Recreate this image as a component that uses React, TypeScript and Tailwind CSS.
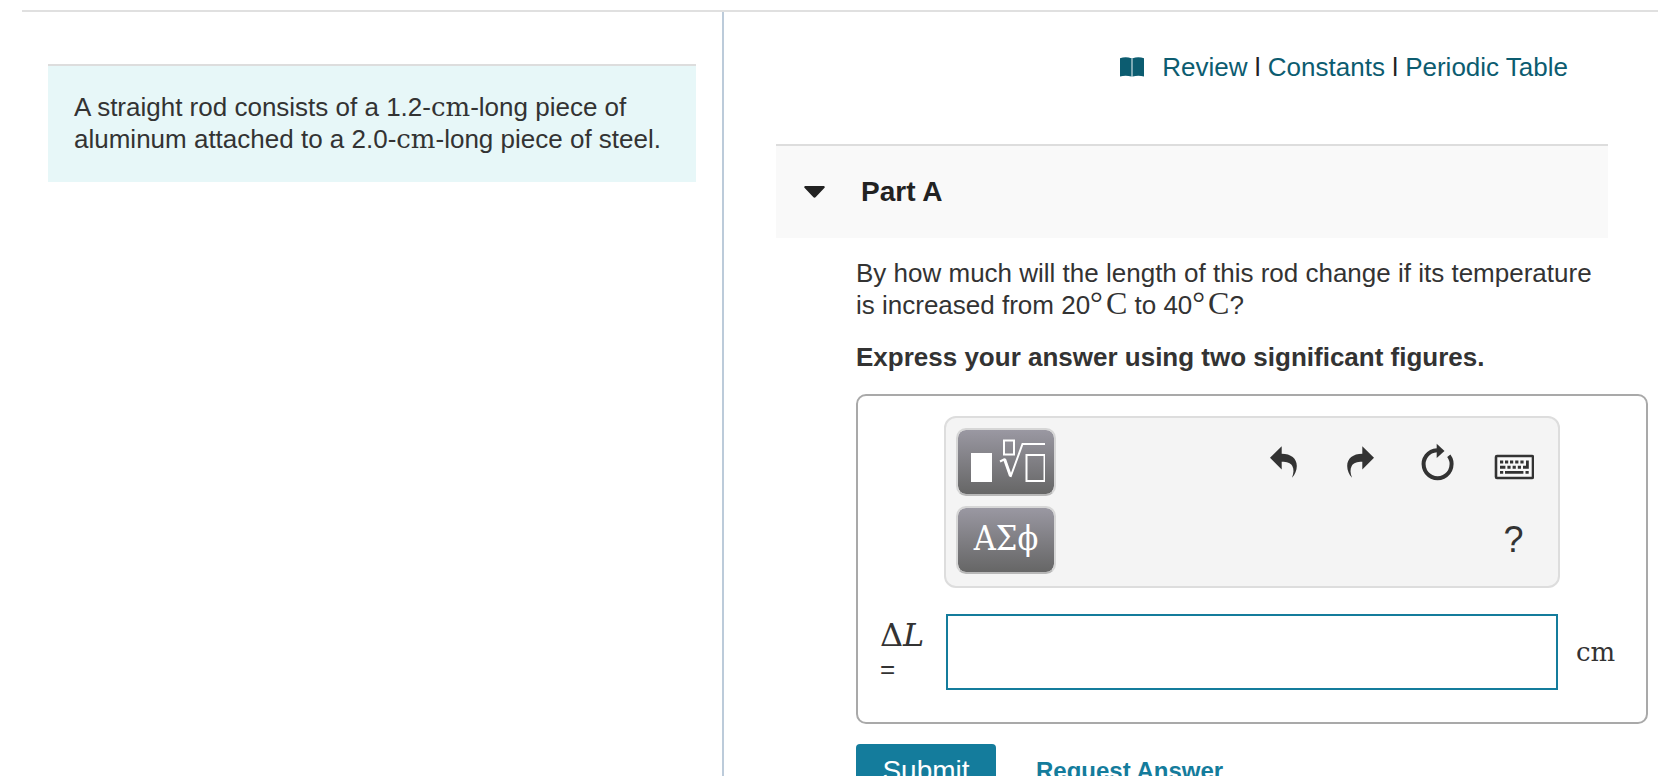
import type { ReactNode } from "react";

function Math({ children }: { children: ReactNode }) {
  return (
    <span className="font-['Liberation_Serif',serif] text-[32px] leading-7">
      {children}
    </span>
  );
}

function Unit({ children }: { children: ReactNode }) {
  return (
    <span className="font-['DejaVu_Serif',serif] text-[26px] leading-7">{children}</span>
  );
}

function Degrees({ value }: { value: number }) {
  return (
    <span className="whitespace-nowrap">
      {value}
      <Math>
        °<span className="ml-[3px]">C</span>
      </Math>
    </span>
  );
}

function IconButton({ label, children }: { label: string; children: ReactNode }) {
  return (
    <button
      type="button"
      aria-label={label}
      className="flex h-[68px] w-[77px] items-center justify-center text-[#333]"
    >
      {children}
    </button>
  );
}

function BookIcon() {
  return (
    <svg width="24" height="20" viewBox="0 0 24 20" aria-hidden="true">
      <path d="M0 1.2C3.5-.1 8-.1 11.2 1.2V19.6C8 18.4 3.5 18.4 0 19.6Z" fill="#0c5c70" />
      <path d="M24 1.2C20.5-.1 16-.1 12.8 1.2V19.6C16 18.4 20.5 18.4 24 19.6Z" fill="#0c5c70" />
      <path d="M12 1V19.500" stroke="#7da9b4" strokeWidth="2" />
    </svg>
  );
}

const arrowPath =
  "M7 15.8 18.7 4.3V11.7C28 11.7 33.8 16.5 33.8 24C33.8 28.5 32 32.5 29 35.8C30.8 31 31 27 29.3 24C27.5 20.8 24 19.8 18.7 19.8V27.6Z";

function UndoIcon() {
  return (
    <svg width="40" height="40" viewBox="0 0 40 40" fill="currentColor" aria-hidden="true">
      <path d={arrowPath} />
    </svg>
  );
}

function RedoIcon() {
  return (
    <svg width="40" height="40" viewBox="0 0 40 40" fill="currentColor" aria-hidden="true">
      <path d={arrowPath} transform="matrix(-1 0 0 1 41 0)" />
    </svg>
  );
}

function ResetIcon() {
  return (
    <svg width="40" height="40" viewBox="0 0 40 40" aria-hidden="true">
      <path
        d="M20 8.2A14 14 0 1 0 31.8 13.8"
        fill="none"
        stroke="currentColor"
        strokeWidth="4"
      />
      <path d="M19.7 1.8 27.5 9 19.7 16Z" fill="currentColor" />
    </svg>
  );
}

function KeyboardIcon() {
  return (
    <svg width="40" height="40" viewBox="0 0 40 40" fill="currentColor" aria-hidden="true">
      <rect x="2" y="14" width="37" height="22" rx="1" fill="#f8f8f8" stroke="currentColor" strokeWidth="2.6" />
      <path d="M6 18.500h3.200v3h-3.200zM11 18.500h3.200v3h-3.200zM16 18.500h3.200v3h-3.200zM21.200 18.500h3.200v3h-3.200zM26.400 18.500h3.200v3h-3.200zM32 18.500h2.800v8.200h-5.800v-3h3z" />
      <path d="M6 23.700h5.400v3h-5.400zM13.400 23.700h3.200v3h-3.200zM18.600 23.700h3.200v3h-3.200zM23.800 23.700h3.200v3h-3.200z" />
      <path d="M6 29h3.200v2.800h-3.200zM11 29h18.400v2.800h-18.400zM31.500 29h3.200v2.800h-3.200z" />
    </svg>
  );
}

function TemplatesIcon() {
  return (
    <svg width="78" height="46" viewBox="-1 0 78 46" fill="none" stroke="#fff" aria-hidden="true">
      <rect x="3" y="14" width="21" height="29" fill="#fff" stroke="none" />
      <rect x="36" y="1.500" width="10" height="14" strokeWidth="2" />
      <path d="M32 22.500 37 20" strokeWidth="2" />
      <path d="M36.500 20 42.500 37" strokeWidth="3" />
      <path d="M42.500 38 54.500 5H77" strokeWidth="2" />
      <rect x="58.500" y="16" width="18" height="26" strokeWidth="2" />
    </svg>
  );
}

function PaletteButton({ label, children }: { label: string; children: ReactNode }) {
  return (
    <button
      type="button"
      aria-label={label}
      className="flex h-[68px] w-[100px] items-center justify-center rounded-[10px] border-2 border-[#d6d6d6] border-b-[#b8b8b8] bg-linear-to-b from-[#9a98a2] to-[#666] bg-clip-padding text-white"
    >
      {children}
    </button>
  );
}

export default function App() {
  return (
    <div className="h-screen overflow-hidden bg-white pt-[10px] pr-[6px] pl-[22px] font-['Liberation_Sans',Arial,sans-serif] text-[26px] leading-8 text-[#333]">
      <div className="grid h-full grid-cols-[702fr_934fr] border-t-2 border-[#e0e0e0]">
        <aside className="border-r-2 border-[#bccbda] px-[26px] pt-[52px]">
          <p className="border-t-2 border-[#ddd] bg-[#e7f7f8] px-[26px] pt-[25px] pb-[27px]">
            A straight rod consists of a 1.2-<Unit>cm</Unit>-long piece of aluminum
            attached to a 2.0-<Unit>cm</Unit>-long piece of steel.
          </p>
        </aside>

        <main className="pr-[50px] pl-[52px]">
          <nav className="flex items-center justify-end pt-[39px] pr-10 text-[#0c5c70]">
            <span className="mr-[18px]">
              <BookIcon />
            </span>
            <p>
              <a href="#review">Review</a> <span className="text-[#222]">l</span>{" "}
              <a href="#constants">Constants</a> <span className="text-[#222]">l</span>{" "}
              <a href="#periodic-table">Periodic Table</a>
            </p>
          </nav>

          <section className="mt-[61px]">
            <h2 className="border-t-2 border-[#ddd] bg-[#f9f9f9] text-[28px] font-bold text-[#222]">
              <button type="button" className="flex h-[92px] w-full items-center pl-7 text-left">
                <svg width="21" height="12" viewBox="0 0 21 12" className="mr-9" aria-hidden="true">
                  <path
                    d="M1.200 0H19.800Q21.600.8 20.300 2L11.800 11Q10.500 12.300 9.200 11L.7 2Q-.6.8 1.200 0Z"
                    fill="#222"
                  />
                </svg>
                Part A
              </button>
            </h2>

            <div className="-mr-10 pt-[19px] pl-20">
              <p className="pr-10">
                By how much will the length of this rod change if its temperature is increased
                from <Degrees value={20} /> to <Degrees value={40} />?
              </p>
              <p className="mt-5 font-bold">Express your answer using two significant figures.</p>

              <div className="mt-[21px] rounded-[10px] border-2 border-[#a9a9a9] pt-5 pb-8">
                <div className="mx-[86px] flex justify-between rounded-xl border-2 border-[#ddd] bg-[#f4f4f4] pt-[10px] pr-[6px] pb-3 pl-[10px]">
                  <div className="flex flex-col gap-[10px]">
                    <PaletteButton label="Templates">
                      <TemplatesIcon />
                    </PaletteButton>
                    <PaletteButton label="Symbols">
                      <span className="pb-1 font-['DejaVu_Serif_Condensed','DejaVu_Serif',serif] text-[34px]">
                        ΑΣϕ
                      </span>
                    </PaletteButton>
                  </div>
                  <div className="flex flex-col items-end gap-[10px]">
                    <div className="flex">
                      <IconButton label="Undo">
                        <UndoIcon />
                      </IconButton>
                      <IconButton label="Redo">
                        <RedoIcon />
                      </IconButton>
                      <IconButton label="Reset">
                        <ResetIcon />
                      </IconButton>
                      <IconButton label="Keyboard shortcuts">
                        <KeyboardIcon />
                      </IconButton>
                    </div>
                    <IconButton label="Help">
                      <span className="text-[36px]">?</span>
                    </IconButton>
                  </div>
                </div>

                <div className="mt-[26px] flex items-center">
                  <label htmlFor="answer" className="w-[88px] shrink-0 pl-[22px] leading-8">
                    <span className="font-['DejaVu_Serif',serif] text-[32px]">
                      Δ<i>L</i>
                    </span>
                    <br />=
                  </label>
                  <input
                    id="answer"
                    type="text"
                    className="h-[76px] min-w-0 grow border-2 border-[#147c9c] bg-white px-3 outline-none"
                  />
                  <span className="w-[88px] shrink-0 pl-[18px]">
                    <Unit>cm</Unit>
                  </span>
                </div>
              </div>

              <div className="mt-5 flex items-center">
                <button
                  type="button"
                  className="h-[54px] w-[140px] rounded-[4px] bg-[#147c9c] text-[28px] text-white"
                >
                  Submit
                </button>
                <a href="#request-answer" className="ml-10 text-[24px] font-bold text-[#147c9c]">
                  Request Answer
                </a>
              </div>
            </div>
          </section>
        </main>
      </div>
    </div>
  );
}
